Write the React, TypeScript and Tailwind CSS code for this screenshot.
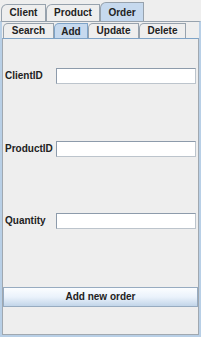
import React from "react";

const font = { fontFamily: '"Liberation Sans", Arial, sans-serif' };

function OuterTab({ label, w, selected }: { label: string; w: string; selected?: boolean }) {
  return (
    <div
      className={
        "flex items-center justify-center rounded-tl-[6px] border border-b-0 border-[#97a2ad] " +
        w +
        (selected ? " h-[20px] bg-[#c6d9ee] -mb-px" : " h-[17px] bg-[#eeeeee]")
      }
    >
      {label}
    </div>
  );
}

function InnerTab({ label, w, selected }: { label: string; w: string; selected?: boolean }) {
  return (
    <div
      className={
        "flex items-center justify-center rounded-tl-[5px] border border-b-0 " +
        w +
        (selected
          ? " h-[16px] border-[#7ea3c7] bg-[#c6d9ee] -mb-px"
          : " h-[15px] border-[#97a2ad] bg-[#eeeeee]")
      }
    >
      {label}
    </div>
  );
}

function Field({ label, className }: { label: string; className: string }) {
  return (
    <div className={"flex items-center " + className}>
      <div className="w-[53px] pl-[2px]">{label}</div>
      <input className="h-[16px] w-[140px] border border-[#bcc4cc] border-l-[#8d9bab] border-t-[#8d9bab] bg-white outline-none" />
    </div>
  );
}

export default function App() {
  return (
    <div
      className="flex h-[337px] w-[201px] flex-col bg-[#eeeeee] text-[10px] font-bold leading-none text-[#222222]"
      style={font}
    >
      {/* top-level tabs */}
      <div className="flex h-[21px] items-end pl-[1px]">
        <OuterTab label="Client" w="w-[45px]" />
        <OuterTab label="Product" w="w-[54px]" />
        <OuterTab label="Order" w="w-[44px]" selected />
      </div>

      <div className="flex flex-1 flex-col border-x-2 border-b-2 border-t border-[#b8cfe6] border-t-[#97a2ad]">
        {/* sub tabs */}
        <div className="flex h-[16px] items-end pl-px">
          <InnerTab label="Search" w="w-[51px]" />
          <InnerTab label="Add" w="w-[34px]" selected />
          <InnerTab label="Update" w="w-[51px]" />
          <InnerTab label="Delete" w="w-[47px]" />
        </div>

        <div className="flex flex-1 flex-col border border-[#a0a8b0] border-t-[#7ea3c7]">
          <Field label="ClientID" className="mt-[29px]" />
          <Field label="ProductID" className="mt-[57px]" />
          <Field label="Quantity" className="mt-[56px]" />
          <button className="mt-[58px] h-[20px] w-full border border-[#97abc0] bg-gradient-to-b from-[#fbfdff] via-[#eaf2fb] to-[#c2d5e9] text-[10px] font-bold text-[#222222]">
            Add new order
          </button>
        </div>
      </div>
    </div>
  );
}
